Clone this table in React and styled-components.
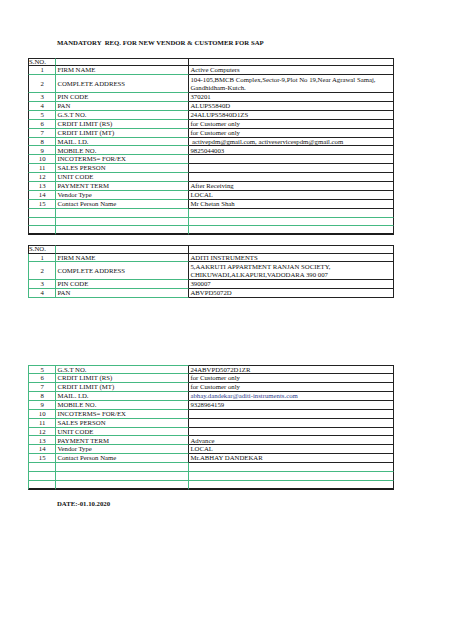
import styled, { createGlobalStyle, css } from "styled-components";

const GREEN = "#45b982";
const INK = "#222222";

const Global = createGlobalStyle`
  html, body {
    margin: 0;
    padding: 0;
    background: #ffffff;
  }
  body {
    font-family: "Liberation Serif", "Times New Roman", serif;
    color: #111111;
  }
`;

const Page = styled.div`
  width: 474px;
  min-height: 632px;
  box-sizing: border-box;
  padding: 39px 0 0 28px;
`;

const Title = styled.div`
  font-size: 6.75px;
  line-height: 8px;
  font-weight: bold;
  white-space: pre;
  padding-left: 29px;
  margin-bottom: 10.5px;
`;

const DateLine = styled.div`
  font-size: 6.75px;
  line-height: 8px;
  font-weight: bold;
  padding-left: 29px;
  margin-top: 10px;
`;

const Sheet = styled.div`
  display: flex;
  flex-direction: column;
  width: 366px;
  margin-bottom: ${(p) => p.$after || 0}px;
`;

const Row = styled.div`
  display: grid;
  grid-template-columns: 28.4px 133px 204.6px;
  height: ${(p) => p.$h}px;
`;

const line = (c) => `1px solid ${c}`;

const Cell = styled.div`
  box-sizing: border-box;
  display: flex;
  align-items: center;
  overflow: hidden;
  white-space: nowrap;
  font-size: 6.75px;
  line-height: 7.7px;
  padding-left: 1px;
  color: ${(p) => p.$tint || "#111111"};

  ${(p) =>
    p.$c === 1 &&
    css`
      justify-content: ${p.$kind === "head" ? "flex-start" : "center"};
      padding-left: 0;
      border-left: ${line(p.$kind === "head" || p.$edge === "dark" ? INK : GREEN)};
      border-right: ${line(GREEN)};
      border-bottom: ${line(p.$kind === "head" ? INK : GREEN)};
    `}
  ${(p) =>
    p.$c === 2 &&
    css`
      border-right: ${line(p.$kind === "blank" ? GREEN : INK)};
      border-bottom: ${line(p.$kind === "head" ? INK : GREEN)};
    `}
  ${(p) =>
    p.$c === 3 &&
    css`
      border-right: ${line(INK)};
      border-bottom: ${line(p.$kind === "blank" ? GREEN : INK)};
    `}
  ${(p) =>
    p.$first &&
    css`
      border-top: ${line(p.$c === 3 || p.$kind === "head" ? INK : GREEN)};
    `}
  ${(p) =>
    p.$last &&
    p.$close === "thick" &&
    css`
      border-bottom: 2px solid #1c1c1c;
    `}
  ${(p) =>
    p.$multi &&
    css`
      white-space: normal;
      flex-direction: column;
      align-items: flex-start;
      justify-content: center;
    `}
`;

const U = 8.9;

const vendorOne = [
  ["head", "S.NO.", "", ""],
  ["data", "1", "FIRM NAME", "Active Computers"],
  ["data", "2", "COMPLETE ADDRESS", ["104-105,BMCB Complex,Sector-9,Plot No 19,Near Agrawal Samaj,", "Gandhidham-Kutch."]],
  ["data", "3", "PIN CODE", "370201"],
  ["data", "4", "PAN", "ALUPS5840D"],
  ["data", "5", "G.S.T NO.", "24ALUPS5840D1ZS"],
  ["data", "6", "CRDIT LIMIT (RS)", "for Customer only"],
  ["data", "7", "CRDIT LIMIT (MT)", "for Customer only"],
  ["data", "8", "MAIL. I.D.", "\u00a0activepdm@gmail.com, activeservicespdm@gmail.com"],
  ["data", "9", "MOBILE NO.", "9825044003"],
  ["data", "10", "INCOTERMS= FOR/EX", ""],
  ["data", "11", "SALES PERSON", ""],
  ["data", "12", "UNIT CODE", ""],
  ["data", "13", "PAYMENT TERM", "After Receiving"],
  ["data", "14", "Vendor Type", "LOCAL"],
  ["data", "15", "Contact Person Name", "Mr Chetan Shah"],
  ["blank", "", "", ""],
  ["blank", "", "", ""],
  ["blank", "", "", ""],
];

const vendorTwoTop = [
  ["head", "S.NO.", "", ""],
  ["data", "1", "FIRM NAME", "ADITI INSTRUMENTS"],
  ["data", "2", "COMPLETE ADDRESS", ["5,AAKRUTI APPARTMENT RANJAN SOCIETY,", "CHIKUWADI,ALKAPURI,VADODARA 390 007"]],
  ["data", "3", "PIN CODE", "390007"],
  ["data", "4", "PAN", "ABVPD5072D"],
];

const vendorTwoRest = [
  ["data", "5", "G.S.T NO.", "24ABVPD5072D1ZR"],
  ["data", "6", "CRDIT LIMIT (RS)", "for Customer only"],
  ["data", "7", "CRDIT LIMIT (MT)", "for Customer only"],
  ["data", "8", "MAIL. I.D.", "abhay.dandekar@aditi-instruments.com", "#2f3b8c"],
  ["data", "9", "MOBILE NO.", "9328964159"],
  ["data", "10", "INCOTERMS= FOR/EX", ""],
  ["data", "11", "SALES PERSON", ""],
  ["data", "12", "UNIT CODE", ""],
  ["data", "13", "PAYMENT TERM", "Advance"],
  ["data", "14", "Vendor Type", "LOCAL"],
  ["data", "15", "Contact Person Name", "Mr.ABHAY DANDEKAR"],
  ["blank", "", "", ""],
  ["blank", "", "", ""],
  ["blank", "", "", ""],
];

function VendorSheet({ rows, edge, close, after }) {
  return (
    <Sheet $after={after}>
      {rows.map(([kind, no, label, value, tint], i) => {
        const multi = Array.isArray(value);
        const shared = {
          $kind: kind,
          $edge: edge,
          $close: close,
          $first: i === 0,
          $last: i === rows.length - 1,
        };
        return (
          <Row key={i} $h={multi ? U * 2 : U}>
            <Cell $c={1} {...shared}>{no}</Cell>
            <Cell $c={2} {...shared}>{label}</Cell>
            <Cell $c={3} {...shared} $multi={multi} $tint={tint}>
              {multi ? value.map((l) => <span key={l}>{l}</span>) : value}
            </Cell>
          </Row>
        );
      })}
    </Sheet>
  );
}

export default function App() {
  return (
    <Page>
      <Global />
      <Title>MANDATORY  REQ. FOR NEW VENDOR &amp; CUSTOMER FOR SAP</Title>
      <VendorSheet rows={vendorOne} edge="dark" close="thick" after={9.3} />
      <VendorSheet rows={vendorTwoTop} edge="green" close="thin" after={67.3} />
      <VendorSheet rows={vendorTwoRest} edge="green" close="thick" />
      <DateLine>DATE:-01.10.2020</DateLine>
    </Page>
  );
}
